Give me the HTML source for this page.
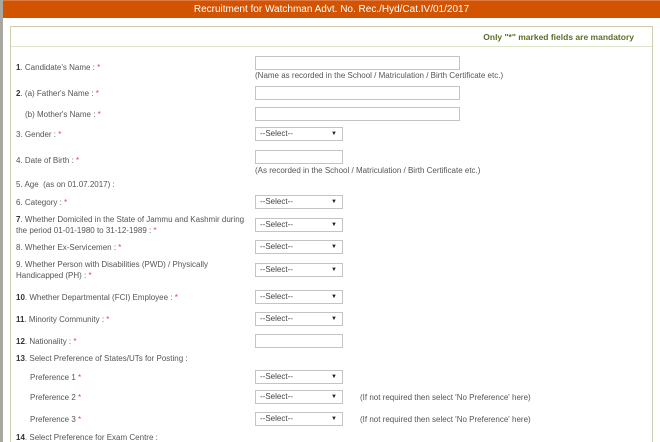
<!DOCTYPE html>
<html><head><meta charset="utf-8">
<style>
*{margin:0;padding:0;box-sizing:border-box}
html,body{width:660px;height:442px;overflow:hidden;background:#fff}
body{position:relative;font-family:"Liberation Sans",Arial,sans-serif;font-size:8px;color:#555}
.a{position:absolute;white-space:nowrap;line-height:11px}
.r{color:#e0405a}
b{color:#333}
.in{position:absolute;border:1px solid #c4c4c4;background:#fff;height:14px}
.sel{position:absolute;border:1px solid #c4c4c4;background:#fff;height:14px;width:88px;font-size:8px;line-height:12px;padding-left:4px;color:#444}
.sel:after{content:"▼";position:absolute;right:5px;top:0;font-size:6px;color:#222}
</style></head><body>
<div style="position:absolute;left:0;top:0;width:3px;height:442px;background:#a8a8a0"></div>
<div style="position:absolute;left:3px;top:0;width:657px;height:18px;background:#d35400;border-top:1px solid #e07a40;color:#fff;font-size:10px;text-align:center;line-height:17px">Recruitment for Watchman Advt. No. Rec./Hyd/Cat.IV/01/2017</div>
<div style="position:absolute;left:10px;top:26px;width:643px;height:430px;border:1px solid #c9d0b0"></div>
<div style="position:absolute;left:11px;top:46px;width:641px;height:1px;background:#dfe5cc"></div>
<div class="a" style="right:26px;top:32px;color:#5a6e2a;font-weight:bold;font-size:8.5px">Only "*" marked fields are mandatory</div>

<div class="a" style="left:16px;top:62px"><b>1</b>. Candidate's Name : <span class="r">*</span></div>
<div class="in" style="left:255px;top:56px;width:205px"></div>
<div class="a" style="left:255px;top:70px">(Name as recorded in the School / Matriculation / Birth Certificate etc.)</div>

<div class="a" style="left:16px;top:88px"><b>2</b>. (a) Father's Name : <span class="r">*</span></div>
<div class="in" style="left:255px;top:86px;width:205px"></div>
<div class="a" style="left:25px;top:109px">(b) Mother's Name : <span class="r">*</span></div>
<div class="in" style="left:255px;top:107px;width:205px"></div>

<div class="a" style="left:16px;top:129px">3. Gender : <span class="r">*</span></div>
<div class="sel" style="left:255px;top:127px">--Select--</div>

<div class="a" style="left:16px;top:155px">4. Date of Birth : <span class="r">*</span></div>
<div class="in" style="left:255px;top:150px;width:88px"></div>
<div class="a" style="left:255px;top:165px">(As recorded in the School / Matriculation / Birth Certificate etc.)</div>

<div class="a" style="left:16px;top:179px">5. Age &nbsp;(as on 01.07.2017) :</div>

<div class="a" style="left:16px;top:197px">6. Category : <span class="r">*</span></div>
<div class="sel" style="left:255px;top:195px">--Select--</div>

<div class="a" style="left:16px;top:214px"><b>7</b>. Whether Domiciled in the State of Jammu and Kashmir during</div>
<div class="a" style="left:16px;top:225px">the period 01-01-1980 to 31-12-1989 : <span class="r">*</span></div>
<div class="sel" style="left:255px;top:218px">--Select--</div>

<div class="a" style="left:16px;top:242px">8. Whether Ex-Servicemen : <span class="r">*</span></div>
<div class="sel" style="left:255px;top:240px">--Select--</div>

<div class="a" style="left:16px;top:259px">9. Whether Person with Disabilities (PWD) / Physically</div>
<div class="a" style="left:16px;top:270px">Handicapped (PH) : <span class="r">*</span></div>
<div class="sel" style="left:255px;top:263px">--Select--</div>

<div class="a" style="left:16px;top:292px"><b>10</b>. Whether Departmental (FCI) Employee : <span class="r">*</span></div>
<div class="sel" style="left:255px;top:290px">--Select--</div>

<div class="a" style="left:16px;top:314px"><b>11</b>. Minority Community : <span class="r">*</span></div>
<div class="sel" style="left:255px;top:312px">--Select--</div>

<div class="a" style="left:16px;top:336px"><b>12</b>. Nationality : <span class="r">*</span></div>
<div class="in" style="left:255px;top:334px;width:88px"></div>

<div class="a" style="left:16px;top:353px"><b>13</b>. Select Preference of States/UTs for Posting :</div>

<div class="a" style="left:30px;top:372px">Preference 1 <span class="r">*</span></div>
<div class="sel" style="left:255px;top:370px">--Select--</div>
<div class="a" style="left:30px;top:392px">Preference 2 <span class="r">*</span></div>
<div class="sel" style="left:255px;top:390px">--Select--</div>
<div class="a" style="left:360px;top:392px">(If not required then select 'No Preference' here)</div>
<div class="a" style="left:30px;top:414px">Preference 3 <span class="r">*</span></div>
<div class="sel" style="left:255px;top:412px">--Select--</div>
<div class="a" style="left:360px;top:414px">(If not required then select 'No Preference' here)</div>

<div class="a" style="left:16px;top:432px"><b>14</b>. Select Preference for Exam Centre :</div>
</body></html>
